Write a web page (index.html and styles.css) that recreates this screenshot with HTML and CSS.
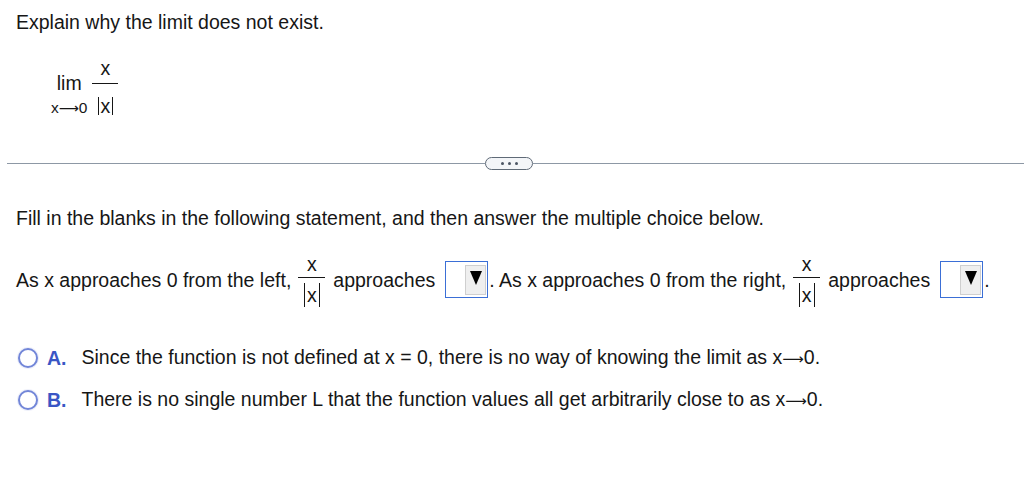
FILE: index.html
```html
<!DOCTYPE html>
<html lang="en">
<head>
<meta charset="utf-8">
<title>Limit question</title>
<link rel="stylesheet" href="styles.css">
</head>
<body>
<div class="page">
  <p class="title">Explain why the limit does not exist.</p>

  <div class="limit">
    <div class="lim">
      <span class="lim-word">lim</span>
      <span class="lim-sub">x<span class="arrow">⟶</span>0</span>
    </div>
    <div class="lfrac">
      <span class="lfrac-num">x</span>
      <span class="lfrac-den"><span class="abs">x</span></span>
    </div>
  </div>

  <div class="divider">
    <span class="rule rule-left"></span>
    <button class="more" type="button" aria-label="More"><i></i><i></i><i></i></button>
    <span class="rule rule-right"></span>
  </div>

  <p class="instr">Fill in the blanks in the following statement, and then answer the multiple choice below.</p>

  <div class="statement">
    <span class="txt">As x approaches 0 from the left,</span>
    <span class="sfrac"><span class="sfrac-num">x</span><span class="sfrac-den"><span class="sabs">x</span></span></span>
    <span class="txt">approaches</span>
    <span class="dropdown"><span class="drop-btn"><svg viewBox="0 0 12 14" width="12" height="14"><polygon points="0,0 12,0 6,14" fill="#000"/></svg></span></span>
    <span class="txt dot">. As x approaches 0 from the right,</span>
    <span class="sfrac"><span class="sfrac-num">x</span><span class="sfrac-den"><span class="sabs">x</span></span></span>
    <span class="txt">approaches</span>
    <span class="dropdown"><span class="drop-btn"><svg viewBox="0 0 12 14" width="12" height="14"><polygon points="0,0 12,0 6,14" fill="#000"/></svg></span></span>
    <span class="txt dot">.</span>
  </div>

  <ul class="options">
    <li class="option"><span class="radio"></span><span class="letter">A.</span><span class="otext">Since the function is not defined at x = 0, there is no way of knowing the limit as x<span class="arrow-in">⟶</span>0.</span></li>
    <li class="option"><span class="radio"></span><span class="letter">B.</span><span class="otext">There is no single number L that the function values all get arbitrarily close to as x<span class="arrow-in">⟶</span>0.</span></li>
  </ul>
</div>
</body>
</html>
```

FILE: styles.css
```css
body {
  margin: 0;
  background: #ffffff;
  color: #161616;
  font-family: "Liberation Sans", Arial, sans-serif;
}

.page {
  padding: 11px 0 0 16px;
  font-size: 19.5px;
}

.title {
  margin: 0;
  line-height: 22px;
}

/* limit expression */
.limit {
  display: flex;
  align-items: flex-start;
  margin: 24px 0 0 35px;
}

.lim {
  display: flex;
  flex-direction: column;
  align-items: center;
  padding-top: 15px;
}

.lim-word {
  line-height: 22px;
}

.lim-sub {
  font-size: 15.5px;
  line-height: 16px;
  margin-top: 6px;
  white-space: nowrap;
}

.arrow {
  font-family: "DejaVu Sans", sans-serif;
  font-size: 14px;
}

.lfrac {
  display: flex;
  flex-direction: column;
  align-items: center;
  width: 26px;
  margin-left: 5px;
}

.lfrac-num {
  align-self: stretch;
  text-align: center;
  line-height: 22px;
  padding-bottom: 4px;
  border-bottom: 1px solid #161616;
}

.lfrac-den {
  margin-top: 11px;
}

.abs {
  display: inline-block;
  padding: 1px 2px 0;
  line-height: 17px;
  border-left: 1px solid #161616;
  border-right: 1px solid #161616;
}

/* divider */
.divider {
  display: flex;
  align-items: center;
  height: 13px;
  margin: 39px 0 0 -9px;
}

.rule {
  height: 1px;
  background: #8d98a5;
}

.rule-left {
  width: 478px;
}

.rule-right {
  flex: 1;
}

.more {
  display: flex;
  align-items: center;
  justify-content: center;
  gap: 4px;
  width: 48px;
  height: 13px;
  padding: 0;
  border: 1px solid #5f6a77;
  border-radius: 7px;
  background: #f3f5f8;
}

.more i {
  width: 3px;
  height: 3px;
  border-radius: 50%;
  background: #4b5563;
}

/* instructions */
.instr {
  margin: 37px 0 0;
  line-height: 22px;
}

/* statement with blanks */
.statement {
  display: flex;
  align-items: flex-start;
  margin-top: 24px;
  white-space: pre;
}

.txt {
  line-height: 22px;
  margin-top: 16px;
}

.sfrac {
  display: flex;
  flex-direction: column;
  align-items: center;
  width: 27px;
  margin: 1px 8px 0 7px;
}

.sfrac-num {
  align-self: stretch;
  text-align: center;
  line-height: 20px;
  padding-bottom: 3px;
  border-bottom: 1px solid #161616;
}

.sfrac-den {
  margin-top: 5px;
}

.sabs {
  display: inline-block;
  padding: 1px 2px 0;
  line-height: 23px;
  border-left: 1.5px solid #161616;
  border-right: 1.5px solid #161616;
}

.dropdown {
  display: flex;
  justify-content: flex-end;
  align-items: center;
  box-sizing: border-box;
  width: 43px;
  height: 37px;
  margin: 8px 0 0 10px;
  padding: 0 1px;
  border: 1px solid #3b6fd6;
  background: #fff;
}

.drop-btn {
  display: flex;
  align-items: center;
  justify-content: center;
  box-sizing: border-box;
  width: 21px;
  height: 30px;
  padding-bottom: 3px;
  border: 1px solid #cfcfcf;
  background: #efefef;
}

.dot {
  margin-left: 1px;
}

/* multiple choice */
.options {
  list-style: none;
  margin: 39px 0 0;
  padding: 0;
}

.option {
  display: flex;
  align-items: center;
  line-height: 22px;
  margin: 0 0 18px 2px;
}

.radio {
  box-sizing: border-box;
  width: 20px;
  height: 20px;
  border: 2px solid #7286d8;
  border-radius: 50%;
  background: #fff;
  box-shadow: 0 0 0 1px rgba(114, 134, 216, 0.12);
}

.letter {
  margin: 0 15px 0 9px;
  font-weight: bold;
  color: #3a56c5;
}

.arrow-in {
  font-family: "DejaVu Sans", sans-serif;
  font-size: 15px;
}
```
